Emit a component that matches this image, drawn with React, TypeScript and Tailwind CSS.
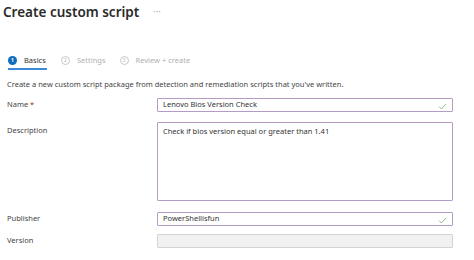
import React from 'react';

const font = { fontFamily: '"Noto Sans", "Open Sans", sans-serif' };

const Check = () => (
    <svg width="9" height="7" viewBox="0 0 9 7" className="absolute right-[5px] top-[4px]">
        <path d="M1 3.6 L3.4 6 L8 1" fill="none" stroke="#8cc08c" strokeWidth="1" />
    </svg>
);

const StepCircle = ({ n, active }: { n: number; active?: boolean }) => (
    <span
        className={
            active
                ? 'w-[9px] h-[9px] rounded-full bg-[#0f6cbd] text-white text-[5px] font-bold flex items-center justify-center'
                : 'w-[9px] h-[9px] rounded-full border border-[#c8c8c8] text-[#b8b8b8] text-[5px] flex items-center justify-center'
        }
    >
        {n}
    </span>
);

const Row = ({ label, children, className }: { label: React.ReactNode; children: React.ReactNode; className?: string }) => (
    <div className={'flex ' + (className || '')}>
        <div className="w-[150px] shrink-0 text-[7.5px] text-[#444]">{label}</div>
        {children}
    </div>
);

export default function App() {
    return (
        <div className="w-[474px] h-[260px] bg-white overflow-hidden text-[#323130]" style={font}>
            <div className="flex items-center pl-[3px] pt-[1px] h-[24px]">
                <h1 className="text-[13.5px] font-semibold leading-none text-[#2b2b2b]">Create custom script</h1>
                <span className="ml-[14px] text-[8px] text-[#999] tracking-[0.5px] -mt-[2px]">···</span>
            </div>

            <div className="flex items-center pl-[8px] mt-[31px] h-[14px] text-[7.5px]">
                <div className="flex flex-col">
                    <div className="flex items-center gap-[7px] h-[12px]">
                        <StepCircle n={1} active />
                        <span className="text-[#333]">Basics</span>
                    </div>
                    <div className="h-[2px] mt-[1px] bg-[#3b8ad8] w-[39px]" />
                </div>
                <div className="flex items-center gap-[7px] ml-[14px] mb-[3px] text-[#b0b0b0]">
                    <StepCircle n={2} />
                    <span>Settings</span>
                </div>
                <div className="flex items-center gap-[7px] ml-[14px] mb-[3px] text-[#b0b0b0]">
                    <StepCircle n={3} />
                    <span>Review + create</span>
                </div>
            </div>

            <div className="pl-[7px] pr-[20px]">
                <p className="text-[7.5px] text-[#444] mt-[10px] leading-[10px]">
                    Create a new custom script package from detection and remediation scripts that you've written.
                </p>

                <Row label={<span>Name <span className="text-[#a4262c]">*</span></span>} className="mt-[9px] items-center">
                    <div className="relative w-[296px] h-[14px] border border-[#b49cc6] rounded-[1px] px-[5px] flex items-center text-[7.5px] text-[#333]">
                        Lenovo Bios Version Check
                        <Check />
                    </div>
                </Row>

                <Row label={<span className="block mt-[3px]">Description</span>} className="mt-[10px]">
                    <div className="w-[296px] h-[79px] border border-[#b49cc6] rounded-[1px] px-[5px] pt-[3px] text-[7.5px] text-[#333] leading-[10px]">
                        Check if bios version equal or greater than 1.41
                    </div>
                </Row>

                <Row label="Publisher" className="mt-[11px] items-center">
                    <div className="relative w-[296px] h-[14px] border border-[#b49cc6] rounded-[1px] px-[5px] flex items-center text-[7.5px] text-[#333]">
                        PowerShellisfun
                        <Check />
                    </div>
                </Row>

                <Row label="Version" className="mt-[8px] items-center">
                    <div className="w-[296px] h-[14px] border border-[#d4d4d4] bg-[#f1f1f1] rounded-[1px]" />
                </Row>
            </div>
        </div>
    );
}
